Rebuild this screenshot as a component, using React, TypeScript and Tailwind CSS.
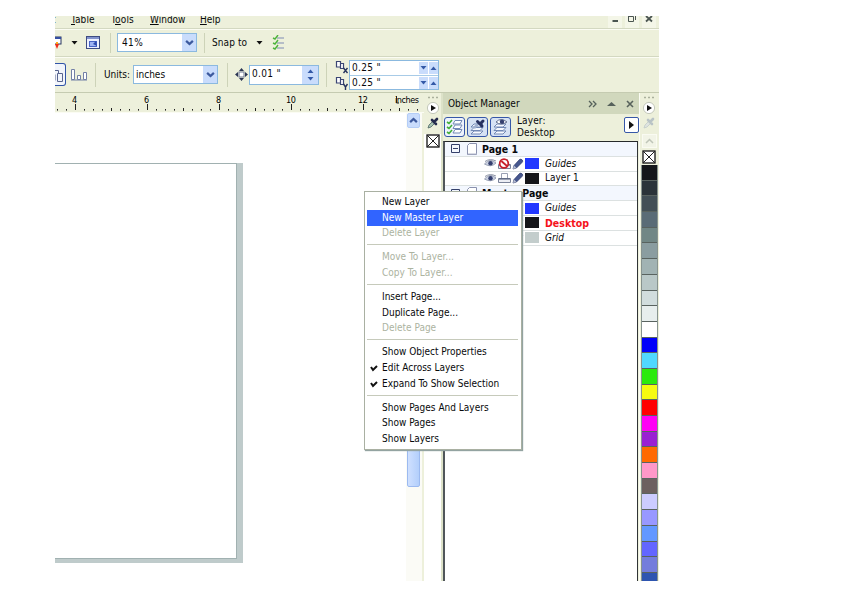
import React from 'react';

const GRAYS_AND_COLORS = [
  '#15171a', '#2b3439', '#435056', '#5a6c76', '#718785', '#8a9da0', '#a1b3b3', '#b9c8c7', '#d1dddd', '#e7eeed',
  '#ffffff', '#0000fa', '#50d8ff', '#2bea0c', '#f6fb10', '#ff0000', '#ff00f5', '#9a20d2', '#ff6a00', '#ff98c8',
  '#6c605f', '#ccccff', '#9898ff', '#6298ff', '#6366ff', '#747ddc', '#2e55b0'
];

const Chevron = ({ up = false, size = 8 }: { up?: boolean; size?: number }) => (
  <svg width={size} height={size} viewBox="0 0 8 8" className={up ? 'rotate-180' : ''}>
    <path d="M1 2.5 L4 5.3 L7 2.5" fill="none" stroke="#3d5a9e" strokeWidth="2" />
  </svg>
);

const Triangle = ({ up = false, color = '#3459a8' }: { up?: boolean; color?: string }) => (
  <svg width="7" height="4" viewBox="0 0 7 4" className={up ? 'rotate-180' : ''}>
    <path d="M0.5 0 H6.5 L3.5 3.5 Z" fill={color} />
  </svg>
);

const Separator = ({ className = '' }: { className?: string }) => (
  <div className={`w-px shrink-0 bg-[#cdd3b8] ${className}`} />
);

const MenuBar = () => (
  <div className="flex h-[13px] border-b border-[#d3d8c1] overflow-hidden shadow-[0_1px_0_#fbfcf3]">
    <div className="flex flex-1 leading-[12px] -mt-[2px]">
      <span className="w-4 h-[13px] -indent-[3px]">t</span>
      <span className="w-[40px] tracking-[0.1px]"><u>T</u>able</span>
      <span className="w-[39px] tracking-[0.2px]">T<u>o</u>ols</span>
      <span className="w-[50px]"><u>W</u>indow</span>
      <span><u>H</u>elp</span>
    </div>
    <div className="flex gap-[3px] pr-[3px]">
      <div className="flex w-[14px] justify-center bg-[#f4f6e8]">
        <svg width="10" height="11"><path d="M2.5 5 H8" stroke="#4b5551" strokeWidth="2" /></svg>
      </div>
      <div className="flex w-[14px] justify-center bg-[#f4f6e8]">
        <svg width="10" height="11">
          <path d="M1.5 1 V5.5 H6.5 V0.5 H1 M8.5 0 V4" fill="none" stroke="#4b5551" />
        </svg>
      </div>
      <div className="flex w-[14px] justify-center bg-[#f4f6e8]">
        <svg width="10" height="11"><path d="M2 0 L8 5.5 M8 0 L2 5.5" stroke="#4b5551" strokeWidth="1.8" /></svg>
      </div>
    </div>
  </div>
);

const StandardBar = () => (
  <div className="flex h-7 items-center border-b border-[#d3d8c1] shadow-[0_1px_0_#fbfcf3]">
    <svg width="7" height="15" viewBox="0 0 7 15">
      <rect x="-2" y="2" width="8" height="7" fill="#fff" stroke="#26345f" />
      <path d="M-1 3 H6" stroke="#354fa2" strokeWidth="2" />
      <path d="M0 9 H4 L2 14 Z" fill="#ef2d1b" />
      <path d="M1 8 H3" stroke="#ffab19" strokeWidth="2" />
    </svg>
    <span className="ml-[9px]"><Triangle color="#111" /></span>
    <svg className="ml-2" width="14" height="13" viewBox="0 0 14 13">
      <rect x="0.5" y="0.5" width="13" height="12" fill="#edf1ff" stroke="#3e4c82" />
      <path d="M1 2 H13" stroke="#8192cc" strokeWidth="2" />
      <rect x="3.5" y="5.5" width="7" height="5" fill="#9fb4f3" stroke="#4763c4" />
      <path d="M7 8 L10 5 L11 10 Z" fill="#2f4cae" />
    </svg>
    <Separator className="ml-[10px] h-5" />
    <div className="ml-[6px] flex h-[19px] w-20 items-center border border-[#8bb9df] bg-white">
      <span className="flex-1 pl-1 tracking-[0.4px]">41%</span>
      <span className="flex h-[17px] w-[14px] items-center justify-center bg-[#c9dcfc]"><Chevron size={9} /></span>
    </div>
    <Separator className="ml-[7px] h-5" />
    <span className="ml-[7px] w-[44px] whitespace-nowrap tracking-[0.1px]">Snap to</span>
    <Triangle color="#111" />
    <svg className="ml-[9px]" width="13" height="15" viewBox="0 0 13 15">
      <path d="M5 3 H12 M5 8 H12 M5 13 H12" stroke="#7e8bb4" />
      <path d="M1 3 L3 4 L6 0 M1 8 L3 9 L6 5 M1 13 L3 14 L6 10" fill="none" stroke="#4eb43c" strokeWidth="1.4" />
    </svg>
  </div>
);

const DuplicateIcon = ({ axis }: { axis: string }) => (
  <svg width="14" height="14" viewBox="0 0 14 14">
    <path d="M1.5 1.5 H5.5 V7 H1.5 Z M5.5 3.5 H8.5 V8.5 H5.5 Z" fill="#fff" stroke="#3b4674" strokeWidth="1.2" />
    <path d={axis === 'x' ? 'M8.5 8 L12.5 13 M12.5 8 L8.5 13' : 'M8.5 8 L10.5 11 L12.5 8 M10.5 11 V14'} fill="none" stroke="#26345f" strokeWidth="1.4" />
  </svg>
);

const PropertyBar = () => (
  <div className="flex h-[35px] items-center">
    <div className="h-[23px] w-[11px] rounded-r-[3px] border border-l-0 border-[#3154a8] bg-[#f2f5fb]">
      <svg width="10" height="21" viewBox="0 0 10 21">
        <path d="M0 6.5 H3.5 V10 M2.5 9.5 H7.5 V17.5 H2.5 Z M0 10.5 V16.5" fill="none" stroke="#59658f" />
      </svg>
    </div>
    <svg className="ml-[5px]" width="17" height="13" viewBox="0 0 17 13">
      <path d="M0.5 1.5 H3.5 V11.5 H0.5 Z M6.5 7.5 H9.5 V11.5 H6.5 Z M12.5 4.5 H15.5 V11.5 H12.5 Z" fill="#fff" stroke="#7380a6" />
      <path d="M0 12 H16" stroke="#7380a6" />
    </svg>
    <Separator className="ml-[7px] h-6" />
    <span className="ml-[8px] w-[29px] whitespace-nowrap">Units:</span>
    <div className="flex h-[19px] w-[85px] items-center border border-[#8bb9df] bg-white">
      <span className="flex-1 pl-[2px]">inches</span>
      <span className="flex h-[17px] w-[14px] items-center justify-center bg-[#c9dcfc]"><Chevron size={9} /></span>
    </div>
    <Separator className="ml-[9px] h-6" />
    <svg className="ml-[7px]" width="13" height="13" viewBox="0 0 13 13">
      <rect x="4" y="4" width="5" height="5" fill="#fff" stroke="#6b7591" />
      <path d="M6.5 0 L9 3 H4 Z M6.5 13 L9 10 H4 Z M0 6.5 L3 4 V9 Z M13 6.5 L10 4 V9 Z" fill="#2b3553" />
    </svg>
    <div className="ml-px flex h-5 w-[70px] items-center border border-[#8bb9df] bg-white">
      <span className="flex-1 pl-[2px] pb-[2px] tracking-[0.3px]">0.01 "</span>
      <span className="flex h-[18px] w-[16px] flex-col items-center justify-center gap-1 bg-[#c9dcfc]">
        <Triangle up />
        <Triangle />
      </span>
    </div>
    <Separator className="ml-[7px] h-6" />
    <div className="ml-[8px] flex flex-col gap-[2px]">
      <DuplicateIcon axis="x" />
      <DuplicateIcon axis="y" />
    </div>
    <div className="mt-px flex h-[30px] w-[90px] flex-col border border-[#8bb9df] bg-white">
      {['x', 'y'].map(axis => (
        <div key={axis} className={`flex h-[14px] items-center ${axis === 'y' ? 'border-t border-[#a8cbe7]' : ''}`}>
          <span className="flex-1 pl-[2px] tracking-[0.3px]">0.25 "</span>
          <span className="flex h-3 w-[9px] items-center justify-center bg-[#c9dcfc]"><Triangle /></span>
          <span className="ml-px flex h-3 w-[9px] items-center justify-center bg-[#c9dcfc]"><Triangle up /></span>
        </div>
      ))}
    </div>
  </div>
);

const Ruler = () => (
  <svg width="369" height="20" className="block bg-[#edf0db]" fontSize="9">
    {Array.from({ length: 41 }).map((_, i) => (
      <rect key={i} x={2 + i * 9} y={i % 8 === 2 ? 11 : i % 4 === 2 ? 15 : 16} width="1" height={i % 8 === 2 ? 6 : i % 4 === 2 ? 3 : 1.6} fill="#222" />
    ))}
    <text x="17" y="10">4</text>
    <text x="89" y="10">6</text>
    <text x="161" y="10">8</text>
    <text x="231" y="10" textLength="10">10</text>
    <text x="303" y="10" textLength="10">12</text>
    <text x="340" y="10" textLength="24">inches</text>
    <path d="M341.5 3 V10 H344" fill="none" stroke="#222" />
    <path d="M0 19.5 H369" stroke="#fbfcf3" />
  </svg>
);

const ScrollBar = () => (
  <div className="flex w-[18px] flex-col border-r-2 border-[#edf0db] bg-[#fbfbf6] pl-[1px]">
    <div className="flex h-[15px] w-[13px] items-center justify-center rounded-[2px] border border-[#b4cdf6] bg-[#c9dcfc]"><Chevron up size={9} /></div>
    <div className="mt-[199px] h-[160px] w-[13px] rounded-[2px] border border-[#9cbaf0] bg-gradient-to-r from-[#cfe0ff] to-[#b3cffb]" />
  </div>
);

const Workspace = () => (
  <div className="flex h-[468px] bg-white">
    <div className="flex-1 pt-[50px]">
      <div className="h-[400px] w-[188px] bg-[#bfcbcb]">
        <div className="h-[396px] w-[182px] border border-l-0 border-[#a1b1b1] bg-white" />
      </div>
    </div>
    <ScrollBar />
  </div>
);

const FlyoutArrow = () => (
  <svg width="14" height="18" viewBox="0 0 14 18">
    <path d="M2 1.5 H4 M6 1.5 H8 M10 1.5 H12" stroke="#aab09c" strokeWidth="1.4" />
    <circle cx="7" cy="12" r="5.6" fill="#fff" stroke="#c4c9bb" />
    <path d="M5 9 L10 12 L5 15 Z" fill="#111" />
  </svg>
);

const EyeDropper = ({ faded = false }: { faded?: boolean }) => (
  <svg width="12" height="12" viewBox="0 0 12 12">
    <path d="M1 11 L2 8 L6 4 L8 6 L4 10 Z" fill={faded ? '#dfe4e0' : '#a9c5b3'} stroke={faded ? '#c2cbc9' : '#4d6765'} strokeWidth="0.8" />
    <path d="M5 3 L9 7 M7.5 4.5 L10 2" stroke={faded ? '#b9c3c6' : '#252b4d'} strokeWidth="2.6" strokeLinecap="round" />
  </svg>
);

const NoColor = () => (
  <svg width="14" height="14" viewBox="0 0 14 14" className="shrink-0">
    <rect x="1" y="1" width="12" height="12" fill="#fff" stroke="#111" strokeWidth="1.3" />
    <path d="M1 1 L13 13 M13 1 L1 13" stroke="#222" />
  </svg>
);

const NarrowPalette = () => (
  <div className="flex w-[17px] flex-col items-center bg-white">
    <div className="flex h-[41px] w-full flex-col items-center bg-[#edf0db] pt-[3px]">
      <FlyoutArrow />
      <span className="mt-[3px]"><EyeDropper /></span>
    </div>
    <NoColor />
  </div>
);

const Eye = () => (
  <svg width="13" height="9" viewBox="0 0 13 9">
    <path d="M0.5 5 Q6 -1.5 12 4 Q7 9 0.5 5 Z" fill="#c9cfe0" stroke="#9aa2b5" />
    <circle cx="6.5" cy="4.3" r="2.2" fill="#35406f" />
    <path d="M1 2.5 Q6 -1 12 2" fill="none" stroke="#8c93a5" />
  </svg>
);

const Printer = ({ blocked = false }: { blocked?: boolean }) => (
  <svg width="13" height="12" viewBox="0 0 13 12">
    <path d="M3.5 6 V1.5 H9.5 V6" fill="#fff" stroke="#9aa1b3" />
    <path d="M0.5 6.5 H12.5 V10.5 H0.5 Z" fill="#eceef4" stroke="#7a839a" />
    <path d="M1 7 H12" stroke="#4b5470" />
    {blocked && (
      <>
        <circle cx="6" cy="5.5" r="4.3" fill="#fff" stroke="#c8202b" strokeWidth="1.8" />
        <path d="M3.3 3 L9 8" stroke="#c8202b" strokeWidth="1.8" />
      </>
    )}
  </svg>
);

const Pencil = () => (
  <svg width="12" height="12" viewBox="0 0 12 12">
    <path d="M1 11 L2 7.5 L7.5 1.5 Q9 0.5 10.3 2 Q11.3 3.2 10 4.5 L4.5 10 Z" fill="#46578f" stroke="#2c3868" strokeWidth="0.7" />
    <path d="M1 11 L2 7.5 L4.5 10 Z" fill="#b9c0d3" />
  </svg>
);

const PageRow = ({ name }: { name: string }) => (
  <div className="flex h-[14.8px] items-center border-b border-[#dce1e1] bg-[#f3f7fe] pl-[6px]">
    <svg width="9" height="9"><path d="M0.5 0.5 H8.5 V8.5 H0.5 Z M2 4.5 H7" fill="none" stroke="#35406b" /></svg>
    <svg className="ml-[6px]" width="12" height="14" viewBox="0 0 12 14">
      <path d="M3.5 1.5 H10.5 V12.5 H1.5 V3.5 Z" fill="#fff" stroke="#8a91ae" />
      <path d="M2 12 H11" stroke="#afb5ca" />
    </svg>
    <span className="ml-[4px] whitespace-nowrap text-[10.5px] font-bold">{name}</span>
  </div>
);

interface LayerRowProps {
  name: string;
  swatch: string;
  blocked?: boolean;
  textStyle?: string;
}

const LayerRow = ({ name, swatch, blocked, textStyle = '' }: LayerRowProps) => (
  <div className="flex h-[14.8px] items-center border-b border-[#dce1e1] pl-[39px]">
    <Eye />
    <span className="ml-px"><Printer blocked={blocked} /></span>
    <span className="ml-[1px]"><Pencil /></span>
    <span className="ml-px h-[11px] w-[14px]" style={{ backgroundColor: swatch }} />
    <span className={`ml-[6px] whitespace-nowrap ${textStyle}`}>{name}</span>
  </div>
);

const Stack = () => (
  <path d="M6 6 H15 L12 9 H3 Z M6 9.5 H15 L12 12.5 H3 Z M6 13 H15 L12 16 H3 Z" fill="#f6f9ff" stroke="#7289b5" />
);

const DockerButton = ({ kind }: { kind: 'all' | 'edit' | 'view' }) => (
  <div className={`h-[20px] w-[21px] rounded-[3px] border border-[#3657a8] ${kind === 'all' ? 'bg-[#eef3fc]' : 'bg-[#d6e2f4]'}`}>
    <svg width="19" height="18" viewBox="0 0 19 18">
      {kind === 'all' ? (
        <>
          <path d="M10 2.5 H17 L15 6 H8 Z M10 7 H17 L15 10.5 H8 Z M10 11.5 H17 L15 15 H8 Z" fill="#fff" stroke="#7289b5" />
          <path d="M2 4 L4 5.5 L7 2 M2 9 L4 10.5 L7 7 M2 14 L4 15.5 L7 12" fill="none" stroke="#3fae35" strokeWidth="1.6" />
        </>
      ) : (
        <Stack />
      )}
      {kind === 'edit' && (
        <>
          <path d="M6 10 L11 5" stroke="#9fb0d0" strokeWidth="2.5" />
          <path d="M9.5 3.5 L14 8 M12 6 L15 3" stroke="#26305f" strokeWidth="3" strokeLinecap="round" />
        </>
      )}
      {kind === 'view' && (
        <>
          <path d="M5 4 Q10 -1 16 4 Q10 8 5 4 Z" fill="#fff" stroke="#65718f" />
          <circle cx="11" cy="3.8" r="2.2" fill="#35406f" />
        </>
      )}
    </svg>
  </div>
);

const ObjectManager = () => (
  <div className="flex w-[196px] flex-col">
    <div className="flex h-[21px] items-center bg-[#d1d8bd] pl-[5px]">
      <span className="flex-1">Object Manager</span>
      <svg width="9" height="8"><path d="M1 1 L4 4 L1 7 M5 1 L8 4 L5 7" fill="none" stroke="#56615b" strokeWidth="1.3" /></svg>
      <svg className="ml-[10px]" width="9" height="6"><path d="M0 5 L4.5 1 L9 5 Z" fill="#56615b" /></svg>
      <svg className="ml-[10px] mr-[5px]" width="8" height="8"><path d="M1 1 L7 7 M7 1 L1 7" stroke="#56615b" strokeWidth="1.6" /></svg>
    </div>
    <div className="flex h-[27px] items-start gap-[1px] pl-[1px]">
      <div className="flex gap-[2px] pt-[3px]">
        <DockerButton kind="all" />
        <DockerButton kind="edit" />
        <DockerButton kind="view" />
      </div>
      <div className="ml-[5px] flex-1 pt-px leading-[12px] tracking-[0.1px]">
        <div>Layer:</div>
        <div>Desktop</div>
      </div>
      <div className="mt-[3px] flex h-4 w-[15px] items-center justify-center rounded-[2px] border border-[#3657a8] bg-white">
        <svg width="5" height="8"><path d="M0 0 L5 4 L0 8 Z" fill="#111" /></svg>
      </div>
    </div>
    <div className="w-[195px] flex-1 border-t-[1.5px] border-r border-l-2 border-t-[#26292b] border-r-[#303437] border-l-[#50565a] bg-white">
      <PageRow name="Page 1" />
      <LayerRow name="Guides" swatch="#2238ff" blocked textStyle="italic" />
      <LayerRow name="Layer 1" swatch="#15161a" textStyle="-ml-px" />
      <PageRow name="Master Page" />
      <LayerRow name="Guides" swatch="#2238ff" blocked textStyle="italic" />
      <LayerRow name="Desktop" swatch="#15161a" textStyle="text-[10.5px] font-bold text-[#f5121a]" />
      <LayerRow name="Grid" swatch="#c3cdcc" blocked textStyle="italic" />
    </div>
  </div>
);

const ColorPalette = () => (
  <div className="flex w-[18px] flex-col items-center overflow-hidden">
    <div className="flex h-[41px] flex-col items-center pt-[3px]">
      <FlyoutArrow />
      <span className="mt-[3px]"><EyeDropper faded /></span>
    </div>
    <div className="mb-[2px] flex h-[14px] w-[15px] shrink-0 items-center justify-center border border-[#fafbf2] bg-[#f2f4e7]">
      <svg width="9" height="6"><path d="M1 5 L4.5 1.5 L8 5" fill="none" stroke="#bfc5b8" strokeWidth="1.5" /></svg>
    </div>
    <NoColor />
    <div className="mt-px w-[17px] flex-1 overflow-hidden border-x border-[#87938f]">
      {GRAYS_AND_COLORS.map(color => (
        <div key={color} className="h-[15.69px] border-b border-[#59635f]" style={{ backgroundColor: color }} />
      ))}
    </div>
  </div>
);

const MENU_GROUPS = [
  [{ label: 'New Layer' }, { label: 'New Master Layer', active: true }, { label: 'Delete Layer', disabled: true }],
  [{ label: 'Move To Layer...', disabled: true }, { label: 'Copy To Layer...', disabled: true }],
  [{ label: 'Insert Page...' }, { label: 'Duplicate Page...' }, { label: 'Delete Page', disabled: true }],
  [{ label: 'Show Object Properties' }, { label: 'Edit Across Layers', checked: true }, { label: 'Expand To Show Selection', checked: true }],
  [{ label: 'Show Pages And Layers' }, { label: 'Show Pages' }, { label: 'Show Layers' }]
] as { label: string; active?: boolean; disabled?: boolean; checked?: boolean }[][];

const ContextMenu = () => (
  <div className="absolute left-[364px] top-[191px] h-[259px] w-[158px] border border-[#a9b0a2] bg-white pl-[2px] pr-[3px] pt-[2px] shadow-[1px_1px_1px_#93a3a1]">
    {MENU_GROUPS.map((group, i) => (
      <div key={i} className={i > 0 ? 'mt-[3px] border-t border-[#c6cabb] pt-[4px]' : ''}>
        {group.map(item => (
          <div
            key={item.label}
            className={`flex h-[15.8px] items-center whitespace-nowrap ${item.active ? 'bg-[#3164ff] text-white' : item.disabled ? 'text-[#acb39f]' : ''}`}
          >
            <span className="w-[15px] pl-[3px]">
              {item.checked && (
                <svg width="8" height="8"><path d="M1 3 L3 6 L7 2" fill="none" stroke="#111" strokeWidth="2" /></svg>
              )}
            </span>
            {item.label}
          </div>
        ))}
      </div>
    ))}
  </div>
);

const App: React.FC = () => {
  return (
    <div className="relative h-[597px] w-[842px] overflow-hidden bg-white pl-[55px] pt-4 font-['DejaVu_Sans_Condensed','DejaVu_Sans',sans-serif] text-[10px] leading-[12px] text-[#08090b]">
      <div className="h-[565px] w-[604px] overflow-hidden bg-[#edf0db]">
        <MenuBar />
        <StandardBar />
        <PropertyBar />
        <div className="flex h-[489px] border-t border-[#c5cbb1]">
          <div className="w-[369px]">
            <Ruler />
            <Workspace />
          </div>
          <NarrowPalette />
          <div className="w-[2px] bg-[#dde2c9]" />
          <ObjectManager />
          <div className="w-px bg-[#fbfcf3]" />
          <ColorPalette />
        </div>
      </div>
      <ContextMenu />
    </div>
  );
};

export default App;
